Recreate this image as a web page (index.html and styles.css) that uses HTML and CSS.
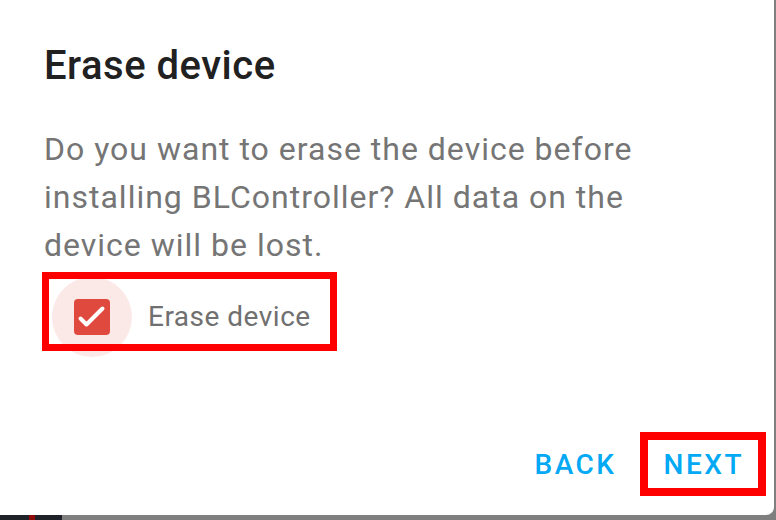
FILE: index.html
```html
<!DOCTYPE html>
<html lang="en">
<head>
<meta charset="utf-8">
<title>Erase device</title>
<link rel="stylesheet" href="styles.css">
</head>
<body>
<div class="screen">
  <div class="dialog">
    <h2 class="title">Erase device</h2>
    <p class="content">Do you want to erase the device before installing BLController? All data on the device will be lost.</p>
    <div class="mark mark-field">
      <label class="field">
        <span class="checkbox">
          <svg viewBox="0 0 36 36" width="36" height="36" aria-hidden="true">
            <polyline points="6.5,19.5 12.5,25.5 28.5,9.5" fill="none" stroke="#fff" stroke-width="4" stroke-linecap="round" stroke-linejoin="round"/>
          </svg>
        </span>
        <span class="label">Erase device</span>
      </label>
    </div>
    <div class="spacer"></div>
    <div class="actions">
      <button class="btn btn-back">Back</button>
      <div class="mark mark-btn">
        <button class="btn btn-next">Next</button>
      </div>
    </div>
  </div>
  <div class="under">
    <div class="under-dark"><span class="under-red"></span></div>
    <div class="under-gray"></div>
  </div>
</div>
</body>
</html>
```

FILE: styles.css
```css
* { box-sizing: border-box; }
html, body { margin: 0; padding: 0; }
body {
  width: 776px;
  height: 520px;
  overflow: hidden;
  background: #7f7f7f;
  font-family: Roboto, "Liberation Sans", sans-serif;
}
.screen {
  display: flex;
  flex-direction: column;
  width: 776px;
  height: 520px;
}
.dialog {
  position: relative;
  z-index: 0;
  width: 774px;
  height: 515px;
  background: #fff;
  border-radius: 0 0 8px 0;
  display: flex;
  flex-direction: column;
  align-items: flex-start;
  padding-left: 44px;
}
.title {
  margin: 0;
  padding-top: 34px;
  font-size: 40px;
  line-height: 64px;
  font-weight: 500;
  letter-spacing: 0.5px;
  color: #212121;
}
.content {
  margin: 27px 0 0 0;
  width: 640px;
  font-size: 32px;
  line-height: 48px;
  letter-spacing: 1px;
  color: #757575;
}
.mark {
  border: 7px solid #ff0000;
}
.mark-field {
  margin: 3px 0 0 -2px;
  padding: 20px 19px 9px 25px;
  display: flex;
}
.field {
  display: flex;
  align-items: center;
}
.checkbox {
  position: relative;
  width: 36px;
  height: 36px;
  border-radius: 4px;
  background: #e04a3e;
  display: flex;
}
.checkbox::before {
  content: "";
  position: absolute;
  z-index: -1;
  left: -22px;
  top: -22px;
  width: 80px;
  height: 80px;
  border-radius: 50%;
  background: #fbe9e8;
}
.label {
  margin-left: 38px;
  font-size: 28px;
  line-height: 36px;
  letter-spacing: 0.5px;
  color: #707070;
}
.spacer { flex: 1; }
.actions {
  align-self: stretch;
  display: flex;
  justify-content: flex-end;
  align-items: center;
  padding-right: 8px;
  margin-bottom: 19px;
}
.btn {
  height: 48px;
  padding: 0 16px;
  border: 0;
  background: transparent;
  font-family: Roboto, "Liberation Sans", sans-serif;
  font-size: 28px;
  font-weight: 500;
  letter-spacing: 2.5px;
  text-transform: uppercase;
  color: #03a9f4;
}
.btn-back { margin-right: 7px; }
.btn-next { padding: 0 14px 0 16px; }
.mark-btn {
  border-width: 8px;
  display: flex;
}
.under {
  display: flex;
  height: 5px;
}
.under-dark {
  width: 62px;
  background: #1f2329;
  display: flex;
  padding-left: 29px;
}
.under-red {
  width: 6px;
  background: #8b0a0a;
}
.under-gray {
  flex: 1;
  background: #7f7f7f;
}
```
